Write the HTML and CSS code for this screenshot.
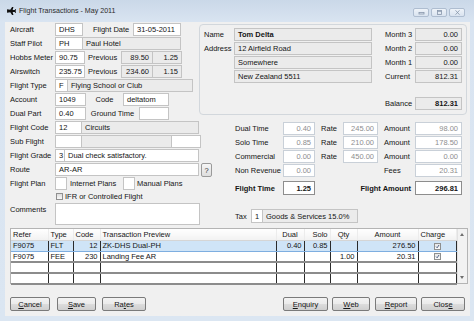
FILE: index.html
```html
<!DOCTYPE html>
<html>
<head>
<meta charset="utf-8">
<title>Flight Transactions</title>
<link rel="stylesheet" href="styles.css">
</head>
<body>
<div class="window">
  <div class="titlebar">
    <svg class="appicon" viewBox="0 0 10 9"><path d="M0 2.6 L3.6 3.2 L5.6 0 L7.2 0 L6.3 3.3 L8.6 3.3 L9.4 2.2 L10 2.2 L9.7 4.5 L10 6.8 L9.4 6.8 L8.6 5.7 L6.3 5.7 L7.2 9 L5.6 9 L3.6 5.8 L0 6.4 Z" fill="#111"/></svg>
    <span class="title">Flight Transactions - May 2011</span>
    <div class="controls">
      <span class="ctl"><svg viewBox="0 0 9 5"><rect x="2" y="2.5" width="5" height="1.5" fill="none" stroke="#8796ab" stroke-width="0.8"/></svg></span>
      <span class="ctl"><svg viewBox="0 0 9 5"><rect x="2.5" y="0.5" width="4" height="4" fill="none" stroke="#8796ab" stroke-width="0.8"/><line x1="2.5" y1="1.4" x2="6.5" y2="1.4" stroke="#8796ab" stroke-width="0.8"/></svg></span>
      <span class="ctl"><svg viewBox="0 0 9 5"><path d="M2.5 0.3 L6.5 4.7 M6.5 0.3 L2.5 4.7" stroke="#8796ab" stroke-width="0.8"/></svg></span>
    </div>
  </div>

  <div class="client">
    <div class="top">
      <div class="left">
        <div class="row"><span class="lbl">Aircraft</span><span class="box w28">DHS</span><span class="lbl w50 pl10">Flight Date</span><span class="box w48">31-05-2011</span></div>
        <div class="row"><span class="lbl">Staff Pilot</span><span class="box w28">PH</span><span class="box ro w99">Paul Hotel</span></div>
        <div class="row"><span class="lbl">Hobbs Meter</span><span class="box w30">90.75</span><span class="lbl w36 pl3">Previous</span><span class="box ro r w32">89.50</span><span class="box ro r w29">1.25</span></div>
        <div class="row"><span class="lbl">Airswitch</span><span class="box w30">235.75</span><span class="lbl w36 pl3">Previous</span><span class="box ro r w32">234.60</span><span class="box ro r w29">1.15</span></div>
        <div class="row"><span class="lbl">Flight Type</span><span class="box w13">F</span><span class="box ro w126">Flying School or Club</span></div>
        <div class="row"><span class="lbl">Account</span><span class="box w31">1049</span><span class="lbl w37 center">Code</span><span class="box w46">deltatom</span></div>
        <div class="row"><span class="lbl">Dual Part</span><span class="box w31">0.40</span><span class="lbl w53 center">Ground Time</span><span class="box w30"></span></div>
        <div class="row"><span class="lbl">Flight Code</span><span class="box w27">12</span><span class="box ro w118">Circuits</span></div>
        <div class="row"><span class="lbl">Sub Flight</span><span class="box w27"></span><span class="box ro w90"></span><span class="box w29"></span></div>
        <div class="row"><span class="lbl">Flight Grade</span><span class="box w10 tight">3</span><span class="box w135">Dual check satisfactory.</span></div>
        <div class="row"><span class="lbl">Route</span><span class="box w144">AR-AR</span><span class="qbtn">?</span></div>
        <div class="row"><span class="lbl">Flight Plan</span><span class="box w12"></span><span class="lbl w56 pl3">Internet Plans</span><span class="box w12"></span><span class="lbl pl2 auto">Manual Plans</span></div>
        <div class="row short"><span class="lbl"></span><span class="cbox"></span><span class="lbl pl2 auto">IFR or Controlled Flight</span></div>
        <div class="row comments"><span class="lbl toplbl">Comments</span><span class="box area"></span></div>
      </div>

      <div class="right">
        <div class="group">
          <div class="gtop">
            <div class="person">
              <div class="row"><span class="lbl glbl">Name</span><span class="box ro b w138">Tom Delta</span></div>
              <div class="row"><span class="lbl glbl">Address</span><span class="box ro w138">12 Airfield Road</span></div>
              <div class="row"><span class="lbl glbl"></span><span class="box ro w138">Somewhere</span></div>
              <div class="row"><span class="lbl glbl"></span><span class="box ro w138">New Zealand 5511</span></div>
            </div>
            <div class="months">
              <div class="row"><span class="lbl mlbl">Month 3</span><span class="box ro r w47">0.00</span></div>
              <div class="row"><span class="lbl mlbl">Month 2</span><span class="box ro r w47">0.00</span></div>
              <div class="row"><span class="lbl mlbl">Month 1</span><span class="box ro r w47">0.00</span></div>
              <div class="row"><span class="lbl mlbl">Current</span><span class="box ro r w47">812.31</span></div>
            </div>
          </div>
          <div class="row balance"><span class="lbl mlbl">Balance</span><span class="box ro r b w47">812.31</span></div>
        </div>

        <div class="charges">
          <span class="clbl">Dual Time</span><span class="box dis r">0.40</span><span class="rlbl">Rate</span><span class="box dis r">245.00</span><span class="albl">Amount</span><span class="box dis r">98.00</span>
          <span class="clbl">Solo Time</span><span class="box dis r">0.85</span><span class="rlbl">Rate</span><span class="box dis r">210.00</span><span class="albl">Amount</span><span class="box dis r">178.50</span>
          <span class="clbl">Commercial</span><span class="box dis r">0.00</span><span class="rlbl">Rate</span><span class="box dis r">450.00</span><span class="albl">Amount</span><span class="box dis r">0.00</span>
          <span class="clbl">Non Revenue</span><span class="box dis r">0.00</span><span class="skip"></span><span class="albl">Fees</span><span class="box dis r">20.31</span>
          <span class="clbl b total">Flight Time</span><span class="box tot r b total">1.25</span><span class="famt b total">Flight Amount</span><span class="box tot r b total">296.81</span>
        </div>

        <div class="tax"><span class="lbl w16">Tax</span><span class="box w11 tight">1</span><span class="box ro w96">Goods &amp; Services 15.0%</span></div>
      </div>
    </div>

    <div class="grid">
      <table>
        <colgroup>
          <col class="c37"><col class="c25"><col class="c27"><col class="c176"><col class="c28"><col class="c26"><col class="c27"><col class="c61"><col class="c38">
        </colgroup>
        <thead>
          <tr><th class="l">Refer</th><th class="l">Type</th><th class="l">Code</th><th class="l">Transaction Preview</th><th>Dual</th><th class="r">Solo</th><th>Qty</th><th>Amount</th><th class="l">Charge</th></tr>
        </thead>
        <tbody>
          <tr class="sel"><td>F9075</td><td>FLT</td><td class="r">12</td><td>ZK-DHS Dual-PH</td><td class="r">0.40</td><td class="r">0.85</td><td></td><td class="r">276.50</td><td class="c"><span class="chk"><svg viewBox="0 0 7 7"><path d="M1.5 3.6 L3 5.3 L5.6 1.4" fill="none" stroke="#2a3f6a" stroke-width="1.1"/></svg></span></td></tr>
          <tr><td>F9075</td><td>FEE</td><td class="r">230</td><td>Landing Fee AR</td><td></td><td></td><td class="r">1.00</td><td class="r">20.31</td><td class="c"><span class="chk"><svg viewBox="0 0 7 7"><path d="M1.5 3.6 L3 5.3 L5.6 1.4" fill="none" stroke="#2a3f6a" stroke-width="1.1"/></svg></span></td></tr>
          <tr><td></td><td></td><td></td><td></td><td></td><td></td><td></td><td></td><td></td></tr>
          <tr><td></td><td></td><td></td><td></td><td></td><td></td><td></td><td></td><td></td></tr>
        </tbody>
      </table>
      <div class="vscroll"><span class="arr up"></span><span class="arr down"></span></div>
    </div>

    <div class="buttons">
      <button class="btn w40"><u>C</u>ancel</button>
      <button class="btn w39 ml7"><u>S</u>ave</button>
      <button class="btn w44 ml6">Ra<u>t</u>es</button>
      <button class="btn w45 push"><u>E</u>nquiry</button>
      <button class="btn w38 ml4"><u>W</u>eb</button>
      <button class="btn w42 ml5"><u>R</u>eport</button>
      <button class="btn w44 ml4">Clos<u>e</u></button>
    </div>
  </div>
</div>
</body>
</html>
```

FILE: styles.css
```css
* { box-sizing: border-box; margin: 0; padding: 0; }
html, body { width: 474px; height: 321px; overflow: hidden; }
body {
  font-family: "Liberation Sans", Arial, sans-serif;
  font-size: 7.5px;
  color: #151515;
  background: #d9e4f1;
}
.window {
  width: 474px;
  height: 321px;
  display: flex;
  flex-direction: column;
  background: linear-gradient(#cad8e8 0px, #d9e4f1 22px, #dbe6f2 100%);
}
.titlebar {
  height: 22px;
  display: flex;
  align-items: center;
  padding: 0 8px 1px 7px;
}
.appicon { width: 9px; height: 8px; margin-right: 3px; }
.title { font-size: 7.1px; color: #2b2b2b; }
.controls {
  margin-left: auto;
  display: flex;
  gap: 2px;
  align-self: flex-start;
  margin-top: 8px;
  margin-right: 1px;
}
.ctl {
  width: 16px;
  height: 9px;
  border: 1px solid #aebdd0;
  border-radius: 2px;
  background: linear-gradient(#eef3f9, #d9e3ef);
  display: flex;
  align-items: center;
  justify-content: center;
}
.ctl svg { width: 9px; height: 5px; }

.client {
  flex: 1;
  margin: 0 4px 5px 5px;
  background: #f0f0f0;
  display: flex;
  flex-direction: column;
  padding: 1px 1px 0 5px;
}
.top { display: grid; grid-template-columns: 189px 1fr; }

.row { display: flex; height: 13px; margin-bottom: 1px; }
.row.short { height: 11px; }
.lbl { width: 45px; flex: none; display: flex; align-items: center; white-space: nowrap; }
.lbl.auto { width: auto; }
.lbl.center { justify-content: center; }
.pl2 { padding-left: 2px; }
.pl3 { padding-left: 3px; }
.pl10 { padding-left: 10px; }

.box {
  flex: none;
  border: 1px solid #c4c4c4;
  background: #fff;
  display: flex;
  align-items: center;
  padding: 0 2px 0 3px;
  white-space: nowrap;
  overflow: hidden;
}
.box + .box { margin-left: -1px; }
.box.ro { background: #ebebeb; }
.box.r { justify-content: flex-end; padding: 0 3px 0 2px; }
.box.tight { padding: 0 0 0 3px; }
.b { font-weight: bold; }

.w10 { width: 10px; } .w11 { width: 12px; } .w12 { width: 12px; } .w13 { width: 13px; }
.w16 { width: 16px; } .w27 { width: 27px; } .w28 { width: 28px; } .w29 { width: 30px; }
.w30 { width: 30px; } .w31 { width: 31px; } .w32 { width: 32px; } .w36 { width: 36px; }
.w37 { width: 37px; } .w38 { width: 38px; } .w39 { width: 39px; } .w40 { width: 40px; }
.w42 { width: 42px; } .w44 { width: 44px; } .w45 { width: 45px; } .w46 { width: 46px; }
.w47 { width: 47px; } .w48 { width: 48px; } .w50 { width: 50px; } .w53 { width: 53px; }
.w56 { width: 56px; } .w90 { width: 91px; } .w96 { width: 96px; } .w99 { width: 99px; }
.w118 { width: 118px; } .w126 { width: 126px; } .w135 { width: 135px; } .w138 { width: 138px; }
.w144 { width: 144px; }

.qbtn {
  flex: none;
  width: 11px;
  height: 14px;
  margin-left: 2px;
  border: 1px solid #9a9a9a;
  border-radius: 2px;
  background: linear-gradient(#f6f6f6, #dedede);
  display: flex;
  align-items: center;
  justify-content: center;
  color: #333;
}
.cbox {
  flex: none;
  width: 7px;
  height: 7px;
  margin: 2px 0 0 1px;
  border: 1px solid #8f8f8f;
  background: linear-gradient(#dcdcdc, #f8f8f8);
}
.row.comments { height: 22px; margin-bottom: 0; }
.toplbl { align-items: flex-start; padding-top: 2px; }
.box.area { width: 145px; }

/* right side */
.right { display: flex; flex-direction: column; }
.group {
  margin-top: 1px;
  width: 268px;
  height: 91px;
  border: 1px solid #d2d7dc;
  border-radius: 4px;
  padding: 3px 4px 0 4px;
  display: flex;
  flex-direction: column;
}
.gtop { display: flex; justify-content: space-between; }
.glbl { width: 30px; }
.mlbl { width: 31px; padding-left: 1px; }
.row.balance { justify-content: flex-end; margin-top: 13px; }

.charges {
  margin-top: 7px;
  padding-left: 36px;
  display: grid;
  grid-template-columns: 48px 32px 28px 35px 37px 47px;
  grid-template-rows: repeat(4, 13px) 17px;
  row-gap: 1px;
}
.charges .box { margin-left: 0; }
.clbl, .rlbl, .albl, .famt { display: flex; align-items: center; white-space: nowrap; }
.rlbl { justify-content: center; }
.albl { padding-left: 6px; }
.skip { grid-column: span 2; }
.box.dis { border-color: #c9d0d8; color: #8e8e8e; }
.total { align-self: end; height: 14px; }
.box.tot { border-color: #8d8d8d; }
.famt { grid-column: 3 / span 3; justify-content: flex-end; padding-right: 4px; }

.tax { display: flex; height: 14px; margin-top: 14px; padding-left: 36px; }

/* grid */
.grid {
  margin-top: 3px;
  width: 458px;
  height: 56px;
  display: flex;
  border: 1px solid #b4b4b4;
  background: #fff;
}
table {
  width: 444px;
  border-collapse: collapse;
  table-layout: fixed;
}
.c37 { width: 37px; } .c25 { width: 25px; } .c27 { width: 27px; } .c176 { width: 176px; }
.c28 { width: 28px; } .c26 { width: 26px; } .c61 { width: 61px; } .c38 { width: 38px; }
th {
  height: 11px;
  font-weight: normal;
  background: linear-gradient(#ffffff, #f2f2f2);
  border-bottom: 1px solid #d5d5d5;
  border-right: 1px solid #ececec;
  text-align: center;
  padding: 0 2px;
  white-space: nowrap;
  overflow: hidden;
}
th.l { text-align: left; }
th.r { text-align: right; }
td {
  height: 11px;
  padding: 0 2px;
  border-right: 1px solid #2b2b2b;
  border-bottom: 2px solid #8c8c8c;
  white-space: nowrap;
  overflow: hidden;
  line-height: 9px;
}
td.r { text-align: right; }
td.c { text-align: center; }
tr.sel td { background: #cfe4f7; border-top: 1px solid #7eaee0; border-bottom: 1px solid #7eaee0; }
.chk {
  display: inline-block;
  width: 7px;
  height: 7px;
  border: 1px solid #8e8f8f;
  background: linear-gradient(#e6e6e6, #fbfbfb);
  vertical-align: middle;
}
.chk svg { display: block; width: 5px; height: 5px; }
.vscroll {
  width: 13px;
  background: #f2f2f2;
  border-left: 1px solid #e2e2e2;
  display: flex;
  flex-direction: column;
  justify-content: space-between;
  align-items: center;
  padding: 4px 0;
}
.arr { width: 0; height: 0; border-left: 2.5px solid transparent; border-right: 2.5px solid transparent; }
.arr.up { border-bottom: 3px solid #6f6f6f; }
.arr.down { border-top: 3px solid #6f6f6f; }

/* buttons */
.buttons { display: flex; margin-top: 13px; height: 14px; padding-right: 4px; }
.btn {
  height: 14px;
  font-family: inherit;
  font-size: 7.5px;
  color: #151515;
  border: 1px solid #7a7a7a;
  border-radius: 2px;
  background: linear-gradient(#f3f3f3 0%, #ebebeb 48%, #dcdcdc 52%, #cfcfcf 100%);
  display: flex;
  align-items: center;
  justify-content: center;
}
.ml4 { margin-left: 4px; } .ml5 { margin-left: 5px; } .ml6 { margin-left: 6px; } .ml7 { margin-left: 7px; }
.push { margin-left: auto; }
```
